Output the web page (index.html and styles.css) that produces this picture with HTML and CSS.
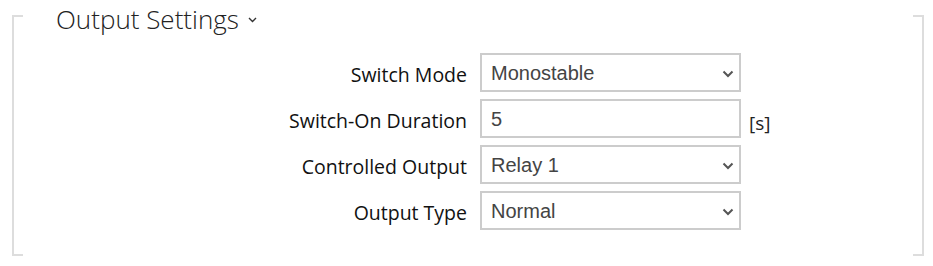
FILE: index.html
```html
<!DOCTYPE html>
<html lang="en">
<head>
<meta charset="utf-8">
<title>Output Settings</title>
<link rel="stylesheet" href="styles.css">
</head>
<body>
<section class="panel">
  <h2 class="title">Output Settings
    <svg class="title-chevron" width="9" height="6" viewBox="0 0 9 6"><path d="M1 1 L4.5 4.5 L8 1" fill="none" stroke="#333" stroke-width="1.4"/></svg>
  </h2>
  <div class="form">
    <label class="label">Switch Mode</label>
    <div class="control select"><span>Monostable</span><svg class="chev" width="12" height="8" viewBox="0 0 12 8"><path d="M1.5 1.5 L6 6 L10.5 1.5" fill="none" stroke="#555" stroke-width="2"/></svg></div>
    <span class="unit"></span>

    <label class="label">Switch-On Duration</label>
    <div class="control input"><span>5</span></div>
    <span class="unit">[s]</span>

    <label class="label">Controlled Output</label>
    <div class="control select"><span>Relay 1</span><svg class="chev" width="12" height="8" viewBox="0 0 12 8"><path d="M1.5 1.5 L6 6 L10.5 1.5" fill="none" stroke="#555" stroke-width="2"/></svg></div>
    <span class="unit"></span>

    <label class="label">Output Type</label>
    <div class="control select"><span>Normal</span><svg class="chev" width="12" height="8" viewBox="0 0 12 8"><path d="M1.5 1.5 L6 6 L10.5 1.5" fill="none" stroke="#555" stroke-width="2"/></svg></div>
    <span class="unit"></span>
  </div>
</section>
</body>
</html>
```
FILE: styles.css
```css
html, body {
  margin: 0;
  padding: 0;
  background: #fff;
}
body {
  width: 933px;
  height: 266px;
  overflow: hidden;
  font-family: "Open Sans", "Noto Sans", sans-serif;
}
.panel {
  position: relative;
  margin: 0 9px 0 12px;
  height: 266px;
}
.panel::before,
.panel::after {
  content: "";
  position: absolute;
  top: 15px;
  height: 237px;
  width: 9px;
  border: 2px solid #ddd;
}
.panel::before {
  left: 0;
  border-right: none;
}
.panel::after {
  right: 0;
  border-left: none;
}
.title {
  margin: 0;
  padding: 1px 0 0 44px;
  height: 53px;
  box-sizing: border-box;
  font-weight: 300;
  font-size: 26px;
  line-height: 36px;
  color: #222;
  display: flex;
  align-items: flex-start;
}
.title-chevron {
  margin-left: 9px;
  margin-top: 16px;
}
.form {
  display: grid;
  grid-template-columns: 455px 261px auto;
  grid-auto-rows: 39px;
  column-gap: 13px;
  row-gap: 7px;
}
.label {
  text-align: right;
  font-size: 19.5px;
  color: #111;
  align-self: center;
  padding-top: 3px;
}
.control {
  box-sizing: border-box;
  border: 2px solid #ccc;
  display: flex;
  align-items: center;
  padding: 1px 4px 0 9px;
  font-family: "Liberation Sans", Arial, sans-serif;
  font-size: 20px;
  color: #444;
}
.control span {
  flex: 1;
}
.chev {
  margin-right: 1px;
  margin-top: 1px;
}
.unit {
  align-self: center;
  padding-top: 9px;
  margin-left: -5px;
  font-size: 19px;
  color: #222;
}
```
